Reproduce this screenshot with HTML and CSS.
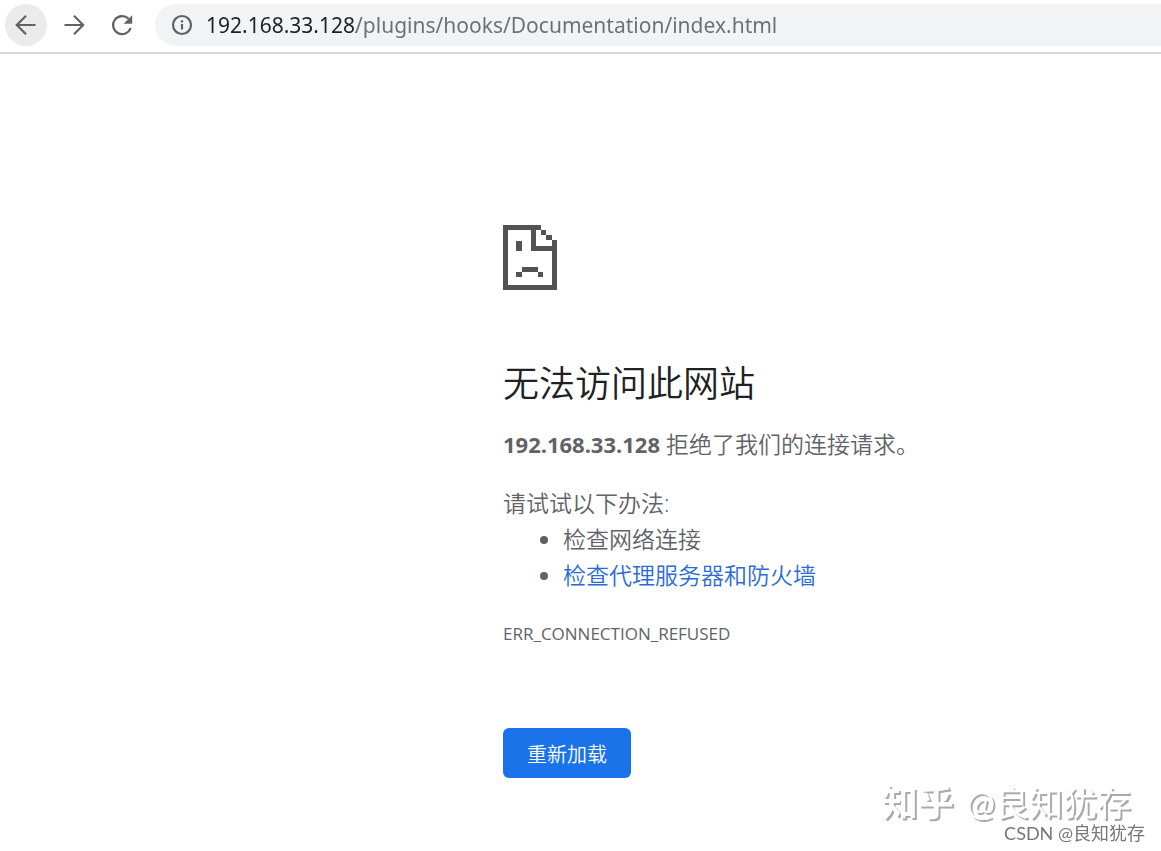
FILE: index.html
```
<!DOCTYPE html>
<html lang="zh-CN">
<head>
  <meta charset="UTF-8">
  <meta name="viewport" content="width=device-width, initial-scale=1.0">
  <title>192.168.33.128</title>
  <link rel="stylesheet" href="styles.css">
</head>
<body>

  <header class="toolbar">
    <button class="nav-button active" type="button" aria-label="后退">
      <svg width="24" height="24" viewBox="0 0 24 24"><path d="M21.5 12H3.5M12 2.8L2.8 12l9.2 9.2"/></svg>
    </button>
    <button class="nav-button" type="button" aria-label="前进">
      <svg width="24" height="24" viewBox="0 0 24 24"><path d="M2.5 12h18M12 2.8l9.2 9.2-9.2 9.2"/></svg>
    </button>
    <button class="nav-button" type="button" aria-label="重新加载此页">
      <svg width="24" height="24" viewBox="0 0 24 24"><path d="M20.6 15A9 9 0 1 1 18.6 5.8"/><path class="fill" d="M22.2 2.2v8.6h-8.6z"/></svg>
    </button>
    <div class="address-bar">
      <svg class="info" width="22" height="22" viewBox="0 0 22 22"><circle cx="11" cy="11" r="9"/><path d="M11 10v5.6M11 6.2v2.2"/></svg>
      <input class="address" type="text" aria-label="地址" spellcheck="false" value="192.168.33.128/plugins/hooks/Documentation/index.html">
    </div>
  </header>

  <main class="error-page">
    <svg class="sad-page" width="54" height="65" viewBox="0 0 162 195" shape-rendering="crispEdges">
      <path d="M0 0h114v15H15v165h132V77H84V15h15v47h48V45h15v150H0z"/>
      <path d="M114 15h16v15h-16zM130 30h17v15h-17z"/>
      <path d="M40 47h16v30H40zM56 125h49v16H56zM40 141h16v15H40zM105 141h16v15h-16z"/>
    </svg>
    <h1>无法访问此网站</h1>
    <p class="summary"><strong>192.168.33.128</strong> 拒绝了我们的连接请求。</p>
    <p class="suggestions">请试试以下办法:</p>
    <ul>
      <li>检查网络连接</li>
      <li><a href="#">检查代理服务器和防火墙</a></li>
    </ul>
    <p class="error-code">ERR_CONNECTION_REFUSED</p>
    <button class="reload" type="button">重新加载</button>
  </main>

  <div class="watermark">
    <div class="zhihu"><span class="logo">知乎</span> @良知犹存</div>
    <div class="csdn">CSDN @良知犹存</div>
  </div>

</body>
</html>
```
FILE: styles.css
```
* {
  box-sizing: border-box;
}

body {
  margin: 0;
  background-color: #fff;
  color: #5f6368;
  font-family: 'Open Sans', 'Noto Sans CJK SC', sans-serif;
  font-size: 23px;
  line-height: 36px;
}

.toolbar {
  display: flex;
  align-items: center;
  gap: 6px;
  padding: 4px 0 6px 5px;
  border-bottom: 2px solid #dadbdc;
}

.nav-button {
  display: flex;
  align-items: center;
  justify-content: center;
  width: 42px;
  height: 42px;
  padding: 0;
  border: none;
  border-radius: 50%;
  background: none;
  cursor: pointer;
}

.nav-button.active,
.nav-button:hover {
  background-color: #ebebec;
}

.toolbar svg {
  flex: none;
  fill: none;
  stroke: #5f6368;
  stroke-width: 2.2;
}

.toolbar .fill {
  fill: #5f6368;
  stroke: none;
}

.address-bar {
  flex: 1;
  display: flex;
  align-items: center;
  gap: 13px;
  height: 42px;
  margin-left: 6px;
  padding-left: 16px;
  border-radius: 21px 0 0 21px;
  background-color: #f1f3f4;
}

/* host part dark, path part grey */
.address {
  flex: 1;
  min-width: 0;
  padding: 0;
  border: none;
  outline: none;
  background: linear-gradient(to right, #202124 150px, #6b6f73 150px);
  background-clip: text;
  -webkit-background-clip: text;
  color: transparent;
  caret-color: #202124;
  font-family: 'Noto Sans', sans-serif;
  font-size: 21px;
  line-height: 36px;
}

.error-page {
  padding: 171px 24px 24px 503px;
}

.sad-page {
  display: block;
  fill: #535353;
}

h1 {
  margin: 70px 0 18px;
  color: #202124;
  font-size: 36px;
  font-weight: 350;
  line-height: 48px;
}

p {
  margin: 0;
}

.summary,
.suggestions,
ul {
  font-weight: 350;
}

.summary strong {
  font-family: 'Noto Sans', sans-serif;
  font-size: 22px;
  font-weight: 700;
}

.suggestions {
  margin-top: 23px;
}

ul {
  margin: 0;
  padding-left: 60px;
}

a {
  color: #2a6bd8;
  text-decoration: none;
}

.error-code {
  margin-top: 27px;
  font-size: 17px;
  line-height: 28px;
}

.reload {
  height: 50px;
  margin-top: 80px;
  padding: 0 24px;
  border: none;
  border-radius: 6px;
  background-color: #1a73e8;
  color: #fff;
  font-family: inherit;
  font-size: 20px;
  font-weight: 350;
  cursor: pointer;
}

.reload:hover {
  background-color: #1765cc;
}

.watermark {
  position: fixed;
  right: 16px;
  bottom: 6px;
  text-align: right;
  font-family: 'Lato', 'Noto Sans CJK SC', sans-serif;
  pointer-events: none;
}

.zhihu {
  padding-right: 14px;
  color: #fff;
  font-size: 34px;
  line-height: 36px;
  text-shadow: 2px 2px 0 #aaa;
}

.zhihu .logo {
  margin-right: 4px;
  font-weight: 700;
  font-size: 36px;
}

.csdn {
  color: #777;
  font-size: 18px;
  line-height: 24px;
}
```
